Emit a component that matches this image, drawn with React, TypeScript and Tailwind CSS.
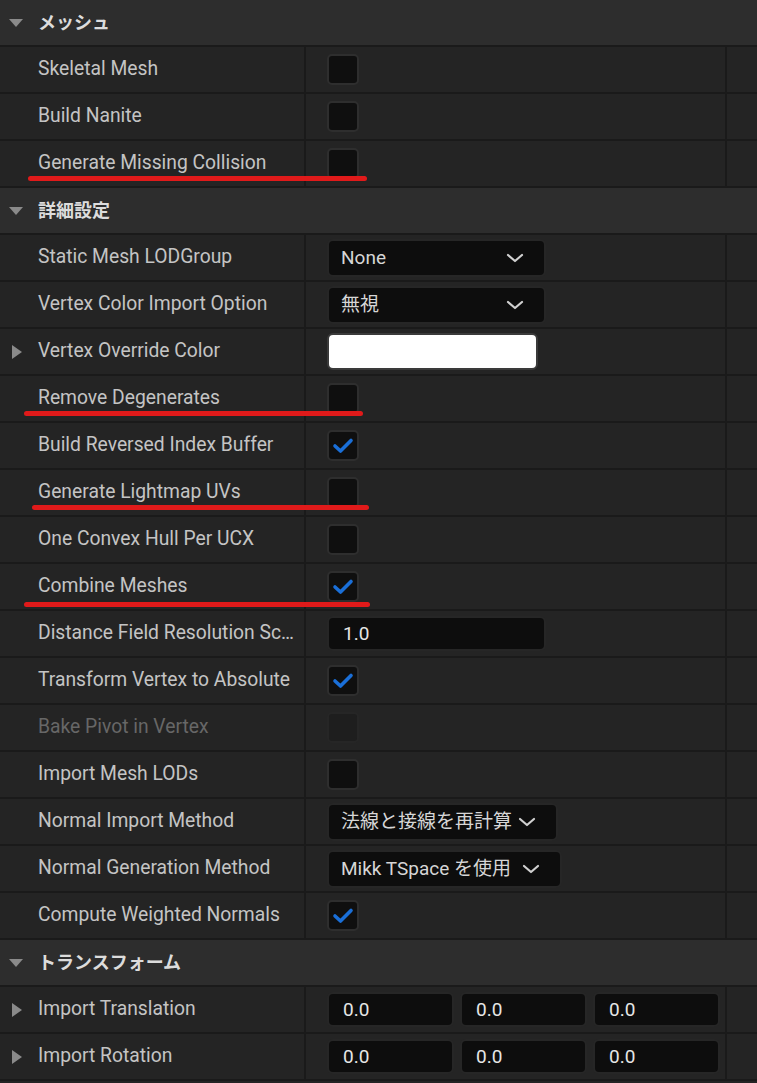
import React from "react";

const FONT = { fontFamily: 'Roboto, "Noto Sans CJK JP", sans-serif' };

function TriDown() {
  return (
    <svg width="16" height="12" viewBox="0 0 16 12" className="shrink-0">
      <polygon points="1,2 15,2 8,10" fill="#8a8a8a" />
    </svg>
  );
}
function TriRight() {
  return (
    <svg width="12" height="16" viewBox="0 0 12 16" className="shrink-0">
      <polygon points="1,1 11,8 1,15" fill="#8a8a8a" />
    </svg>
  );
}
function Chevron() {
  return (
    <svg width="18" height="12" viewBox="0 0 18 12" className="shrink-0">
      <polyline points="2,3 9,9 16,3" fill="none" stroke="#d0d0d0" strokeWidth="2.2" strokeLinecap="round" strokeLinejoin="round" />
    </svg>
  );
}

function Checkbox({ checked, disabled }: { checked?: boolean; disabled?: boolean }) {
  return (
    <div
      className={
        "w-[32px] h-[31px] rounded-[5px] border-2 flex items-center justify-center " +
        (disabled ? "border-[#262626] bg-[#1e1e1e]" : "border-[#2e2e2e] bg-[#0f0f0f]")
      }
    >
      {checked && (
        <svg width="22" height="18" viewBox="0 0 22 18">
          <polyline points="3,9 8.5,14 19,3.5" fill="none" stroke="#1a6fd8" strokeWidth="3.6" strokeLinecap="round" strokeLinejoin="round" />
        </svg>
      )}
    </div>
  );
}

function Dropdown({ text, w }: { text: string; w: string }) {
  return (
    <div className={"h-[38px] rounded-[6px] border-2 border-[#262626] bg-[#0d0d0d] flex items-center justify-between pl-[12px] pr-[20px] " + w}>
      <span className="text-[19px] text-[#d6d6d6] leading-none whitespace-nowrap">{text}</span>
      <Chevron />
    </div>
  );
}

function NumField({ text, w }: { text: string; w: string }) {
  return (
    <div className={"h-[35px] rounded-[6px] border-2 border-[#262626] bg-[#0d0d0d] flex items-center pl-[14px] " + w}>
      <span className="text-[19px] text-[#e6e6e6] leading-none">{text}</span>
    </div>
  );
}

function Header({ title }: { title: string }) {
  return (
    <div className="h-[47px] border-b-2 border-[#1a1a1a] bg-[#2d2d2d] flex items-center pl-[8px] gap-[14px]">
      <TriDown />
      <span className="text-[18px] font-bold text-[#dcdcdc]">{title}</span>
    </div>
  );
}

function Row({
  label,
  children,
  expand,
  disabled,
}: {
  label: string;
  children?: React.ReactNode;
  expand?: boolean;
  disabled?: boolean;
}) {
  return (
    <div className="h-[47px] border-b-2 border-[#1a1a1a] bg-[#242424] flex">
      <div className="w-[306px] shrink-0 border-r-2 border-[#1a1a1a] flex items-center">
        <div className="w-[38px] shrink-0 flex items-center pl-[11px]">{expand && <TriRight />}</div>
        <span
          className={
            "text-[19.3px] whitespace-nowrap " + (disabled ? "text-[#676767]" : "text-[#c4c4c4]")
          }
        >
          {label}
        </span>
      </div>
      <div className="w-[421px] shrink-0 border-r-2 border-[#1a1a1a] flex items-center pl-[21px] gap-[6px]">
        {children}
      </div>
      <div className="flex-1" />
    </div>
  );
}

export default function App() {
  return (
    <div className="relative w-[757px] h-[1083px] bg-[#242424] overflow-hidden" style={FONT}>
      <Header title="メッシュ" />
      <Row label="Skeletal Mesh"><Checkbox /></Row>
      <Row label="Build Nanite"><Checkbox /></Row>
      <Row label="Generate Missing Collision"><Checkbox /></Row>
      <Header title="詳細設定" />
      <Row label="Static Mesh LODGroup"><Dropdown text="None" w="w-[219px]" /></Row>
      <Row label="Vertex Color Import Option"><Dropdown text="無視" w="w-[219px]" /></Row>
      <Row label="Vertex Override Color" expand>
        <div className="w-[211px] h-[37px] rounded-[6px] border-2 border-[#3a3a3a] bg-white" />
      </Row>
      <Row label="Remove Degenerates"><Checkbox /></Row>
      <Row label="Build Reversed Index Buffer"><Checkbox checked /></Row>
      <Row label="Generate Lightmap UVs"><Checkbox /></Row>
      <Row label="One Convex Hull Per UCX"><Checkbox /></Row>
      <Row label="Combine Meshes"><Checkbox checked /></Row>
      <Row label="Distance Field Resolution Sc…"><NumField text="1.0" w="w-[219px]" /></Row>
      <Row label="Transform Vertex to Absolute"><Checkbox checked /></Row>
      <Row label="Bake Pivot in Vertex" disabled><Checkbox disabled /></Row>
      <Row label="Import Mesh LODs"><Checkbox /></Row>
      <Row label="Normal Import Method"><Dropdown text="法線と接線を再計算" w="w-[231px]" /></Row>
      <Row label="Normal Generation Method"><Dropdown text="Mikk TSpace を使用" w="w-[235px]" /></Row>
      <Row label="Compute Weighted Normals"><Checkbox checked /></Row>
      <Header title="トランスフォーム" />
      <Row label="Import Translation" expand>
        <NumField text="0.0" w="w-[127px]" />
        <NumField text="0.0" w="w-[127px]" />
        <NumField text="0.0" w="w-[127px]" />
      </Row>
      <Row label="Import Rotation" expand>
        <NumField text="0.0" w="w-[127px]" />
        <NumField text="0.0" w="w-[127px]" />
        <NumField text="0.0" w="w-[127px]" />
      </Row>

      {/* red annotation underlines */}
      <div className="absolute left-[28px] top-[176px] w-[339px] h-[5px] rounded-full bg-[#e01a1a]" />
      <div className="absolute left-[24px] top-[411px] w-[339px] h-[5px] rounded-full bg-[#e01a1a]" />
      <div className="absolute left-[32px] top-[505px] w-[337px] h-[5px] rounded-full bg-[#e01a1a]" />
      <div className="absolute left-[24px] top-[602px] w-[346px] h-[5px] rounded-full bg-[#e01a1a]" />
    </div>
  );
}
